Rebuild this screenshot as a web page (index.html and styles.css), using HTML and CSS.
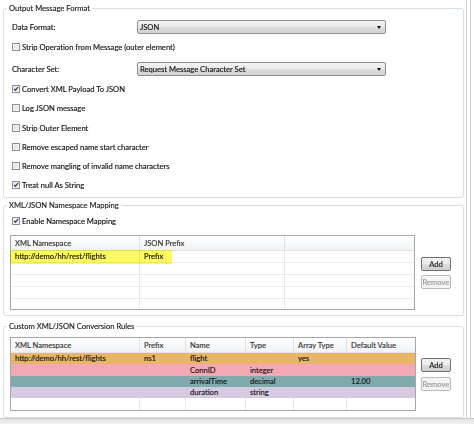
FILE: index.html
```html
<!DOCTYPE html>
<html>
<head>
<meta charset="utf-8">
<link rel="stylesheet" href="styles.css">
</head>
<body>
<div class="window">
  <div class="main">
    <fieldset class="group g1">
      <legend>Output Message Format</legend>
      <div class="row r1">
        <span class="label">Data Format:</span>
        <div class="combo"><span>JSON</span><i class="arrow"></i></div>
      </div>
      <div class="row r2"><span class="cb"></span><span>Strip Operation from Message (outer element)</span></div>
      <div class="row r3">
        <span class="label">Character Set:</span>
        <div class="combo"><span>Request Message Character Set</span><i class="arrow"></i></div>
      </div>
      <div class="row m6"><span class="cb on"><svg viewBox="0 0 8 8"><path d="M1.6 4.1 L3.3 5.9 L6.6 1.6"/></svg></span><span>Convert XML Payload To JSON</span></div>
      <div class="row m5"><span class="cb"></span><span>Log JSON message</span></div>
      <div class="row m6"><span class="cb"></span><span>Strip Outer Element</span></div>
      <div class="row m5"><span class="cb"></span><span>Remove escaped name start character</span></div>
      <div class="row m5"><span class="cb"></span><span>Remove mangling of invalid name characters</span></div>
      <div class="row m5"><span class="cb on"><svg viewBox="0 0 8 8"><path d="M1.6 4.1 L3.3 5.9 L6.6 1.6"/></svg></span><span>Treat null As String</span></div>
    </fieldset>

    <fieldset class="group g2">
      <legend>XML/JSON Namespace Mapping</legend>
      <div class="row m3"><span class="cb on"><svg viewBox="0 0 8 8"><path d="M1.6 4.1 L3.3 5.9 L6.6 1.6"/></svg></span><span>Enable Namespace Mapping</span></div>
      <div class="tblrow t2row">
        <div class="tbl ns">
          <div class="hl"></div>
          <div class="th">XML Namespace</div><div class="th">JSON Prefix</div><div class="th"></div>
          <div class="td">http://demo/hh/rest/flights</div><div class="td">Prefix</div><div class="td"></div>
          <div class="td"></div><div class="td"></div><div class="td"></div>
          <div class="td"></div><div class="td"></div><div class="td"></div>
          <div class="td"></div><div class="td"></div><div class="td"></div>
          <div class="td last"></div><div class="td last"></div><div class="td last"></div>
        </div>
        <div class="btns b2">
          <div class="btn">Add</div>
          <div class="btn dis">Remove</div>
        </div>
      </div>
    </fieldset>

    <fieldset class="group g3">
      <legend>Custom XML/JSON Conversion Rules</legend>
      <div class="tblrow t3row">
        <div class="tbl rules">
          <div class="th">XML Namespace</div><div class="th">Prefix</div><div class="th">Name</div><div class="th">Type</div><div class="th">Array Type</div><div class="th">Default Value</div>
          <div class="tr orange h11"><div>http://demo/hh/rest/flights</div><div>ns1</div><div>flight</div><div></div><div>yes</div><div></div></div>
          <div class="tr pink h12"><div></div><div></div><div>ConnID</div><div>integer</div><div></div><div></div></div>
          <div class="tr teal h11"><div></div><div></div><div>arrivalTime</div><div>decimal</div><div></div><div>12.00</div></div>
          <div class="tr purple h11"><div></div><div></div><div>duration</div><div>string</div><div></div><div></div></div>
          <div class="tr empty h12"><div></div><div></div><div></div><div></div><div></div><div></div></div>
        </div>
        <div class="btns b3">
          <div class="btn">Add</div>
          <div class="btn dis">Remove</div>
        </div>
      </div>
    </fieldset>
  </div>
  <div class="sash"></div>
</div>
<div class="status"></div>
</body>
</html>
```
FILE: styles.css
```css
* { box-sizing: border-box; }
html, body { margin: 0; padding: 0; background: #fff; }
body {
  width: 474px;
  height: 424px;
  overflow: hidden;
  font-family: "Lato", "Liberation Sans", sans-serif;
  font-size: 7.6px;
  color: #141414;
  -webkit-text-stroke: 0.15px currentColor;
}
.window { display: flex; height: 418px; }
.main {
  width: 467px;
  border-right: 1px solid #d6d6d6;
  padding-top: 2px;
}
.sash {
  width: 4px;
  border-right: 1px solid #cfcfcf;
}
.status {
  height: 6px;
  border-top: 1px solid #c9c9c9;
  background: linear-gradient(#e4e4e4, #f0f0f0);
}

.group {
  margin: 0 0 0 3px;
  width: 461px;
  border: 1px solid #d5dfe5;
  border-radius: 3px;
  padding: 0 0 0 7px;
  min-inline-size: 0;
}
.group legend {
  margin-left: -4px;
  padding: 0 2px;
  line-height: 12px;
  height: 12px;
  color: #1e1e1e;
}
.g1 { padding-bottom: 5px; }
.g2 { margin-top: 1px; padding-bottom: 5px; }
.g3 { margin-top: 4px; padding-bottom: 6px; }

.row {
  display: flex;
  align-items: center;
  height: 14px;
  margin-left: 1px;
  white-space: nowrap;
}
.r1 { margin-top: 6px; }
.r2 { margin-top: 6px; }
.r3 { margin-top: 8px; }
.m6 { margin-top: 6px; }
.m5 { margin-top: 5px; }
.m3 { margin-top: 3px; }

.label { width: 125px; }
.combo {
  width: 249px;
  height: 14px;
  border: 1px solid #8e8f8f;
  border-radius: 2px;
  background: linear-gradient(#f3f3f3 0%, #ebebeb 50%, #dedede 51%, #d2d2d2 100%);
  display: flex;
  align-items: center;
  padding-left: 2px;
  padding-right: 4px;
}
.combo span { flex: 1; }
.arrow {
  width: 0; height: 0;
  border-left: 2.5px solid transparent;
  border-right: 2.5px solid transparent;
  border-top: 3px solid #111;
}

.cb {
  width: 8px;
  height: 8px;
  margin-right: 2px;
  border: 1px solid #8f8f8f;
  background: linear-gradient(135deg, #dcdcdc, #f6f6f6);
  box-shadow: inset 0 0 0 1px #f4f4f4;
  display: inline-flex;
}
.cb svg { width: 6px; height: 6px; display: block; }
.cb path { fill: none; stroke: #2c3f72; stroke-width: 1.5; stroke-linecap: round; stroke-linejoin: round; }

.tblrow { display: flex; align-items: flex-start; margin-left: -1px; }
.t2row { margin-top: 7px; }
.t3row { margin-top: 5px; }

.tbl {
  position: relative;
  border: 1px solid #a7a7a7;
  display: grid;
  background: #fff;
}
.ns {
  width: 405px;
  grid-template-columns: 129px 145px 1fr;
}
.rules {
  width: 406px;
  grid-template-columns: 129px 46px 60px 48px 53px 1fr;
}
.th {
  height: 15px;
  line-height: 14px;
  padding-left: 4px;
  color: #333;
  border-right: 1px solid #dfe2e5;
  border-bottom: 1px solid #e2e4e6;
  background: linear-gradient(#ffffff, #f0f2f4);
  white-space: nowrap;
}
.ns .th:nth-child(4) { border-right: 0; }
.ns .td {
  height: 12px;
  line-height: 11px;
  padding-left: 4px;
  border-right: 1px solid #e8e8e8;
  border-bottom: 1px solid #ededed;
  white-space: nowrap;
}
.ns .td:nth-child(3n+1) { border-right: 0; }
.ns .td.last { height: 10px; border-bottom: 0; }
.hl {
  position: absolute;
  left: -1px;
  top: 14px;
  width: 162px;
  height: 14px;
  background: #fbfa62;
  mix-blend-mode: multiply;
}

.rules .th:nth-child(6) { border-right: 0; }
.tr { display: contents; }
.tr > div {
  padding-left: 4px;
  white-space: nowrap;
}
.h11 > div { height: 11px; line-height: 11px; }
.h12 > div { height: 12px; line-height: 12px; }
.orange > div { background: #e9b666; }
.pink > div { background: #f3a9b4; }
.teal > div { background: #80aaac; }
.purple > div { background: #d5cae2; }
.empty > div { border-right: 1px solid #e8e8e8; }
.empty > div:last-child { border-right: 0; }

.btns { display: flex; flex-direction: column; margin-left: 6px; }
.b3 { margin-left: 5px; }
.btn {
  width: 30px;
  height: 14px;
  border: 1px solid #707070;
  border-radius: 2px;
  background: linear-gradient(#f2f2f2 0%, #ebebeb 50%, #dddddd 51%, #cfcfcf 100%);
  text-align: center;
  line-height: 12px;
  color: #1e1e1e;
}
.b2 .btn:first-child { margin-top: 22px; }
.b2 .btn.dis { margin-top: 4px; }
.b3 .btn:first-child { margin-top: 21px; }
.b3 .btn.dis { margin-top: 5px; }
.btn.dis {
  border-color: #b7bbbe;
  background: #f4f4f4;
  color: #9a9a9a;
}
```
